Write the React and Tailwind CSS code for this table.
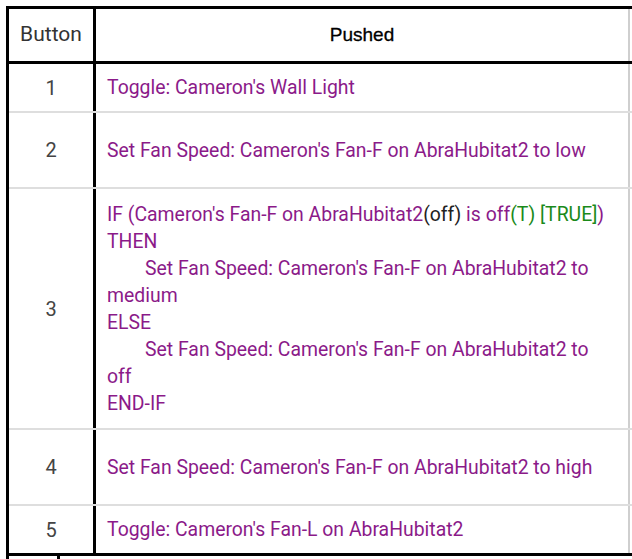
import React from 'react';

const purple = 'text-[#8b1a89]';

const rows = [
  { n: '1', h: 'h-[47px]', lines: [<span className={purple}>Toggle: Cameron's Wall Light</span>] },
  { n: '2', h: 'h-[74px]', lines: [<span className={purple}>Set Fan Speed: Cameron's Fan-F on AbraHubitat2 to low</span>] },
  {
    n: '3',
    h: 'h-[239px]',
    lines: [
      <span className={purple}>
        IF (Cameron's Fan-F on AbraHubitat2<span className="text-[#222]">(off)</span> is off
        <span className="text-[#1a8a1a]">(T) [TRUE]</span>)
      </span>,
      <span className={purple}>THEN</span>,
      <span className={`${purple} pl-[38px]`}>Set Fan Speed: Cameron's Fan-F on AbraHubitat2 to</span>,
      <span className={purple}>medium</span>,
      <span className={purple}>ELSE</span>,
      <span className={`${purple} pl-[38px]`}>Set Fan Speed: Cameron's Fan-F on AbraHubitat2 to</span>,
      <span className={purple}>off</span>,
      <span className={purple}>END-IF</span>,
    ],
  },
  { n: '4', h: 'h-[74px]', lines: [<span className={purple}>Set Fan Speed: Cameron's Fan-F on AbraHubitat2 to high</span>] },
  { n: '5', h: 'h-[47px]', lines: [<span className={purple}>Toggle: Cameron's Fan-L on AbraHubitat2</span>] },
];

export default function App() {
  return (
    <div className="w-[632px] h-[559px] overflow-hidden bg-white pl-[6px] pt-[6px]" style={{ fontFamily: 'Roboto, sans-serif' }}>
      <div className="w-[700px] border-l-[3px] border-t-[3px] border-black">
        {/* header */}
        <div className="flex h-[55px] border-b-[3px] border-black">
          <div className="w-[87px] flex items-center justify-center text-[21px] text-[#333] border-r-[3px] border-black">
            Button
          </div>
          <div
            className="w-[534px] flex items-center justify-center text-[19px] text-black border-r-2 border-[#cfcfcf]"
            style={{ fontFamily: '"Liberation Sans", Arial, sans-serif', WebkitTextStroke: '0.3px black' }}
          >
            Pushed
          </div>
        </div>
        {rows.map((r, i) => (
          <div key={r.n} className={`flex ${i < rows.length - 1 ? 'border-b-2 border-[#dedede]' : 'border-b-[3px] border-black'}`}>
            <div className={`${r.h} w-[87px] flex items-center justify-center text-[20px] text-[#444] border-r-[3px] border-black`}>
              {r.n}
            </div>
            <div className={`${r.h} w-[534px] flex flex-col justify-center px-[11px] text-[19.4px] leading-[27px] border-r-2 border-[#cfcfcf]`}>
              {r.lines.map((l, j) => (
                <div key={j} className="whitespace-nowrap">{l}</div>
              ))}
            </div>
          </div>
        ))}
        <div className="flex h-[10px]">
          <div className="w-[51px] border-r-[3px] border-black" />
        </div>
      </div>
    </div>
  );
}
